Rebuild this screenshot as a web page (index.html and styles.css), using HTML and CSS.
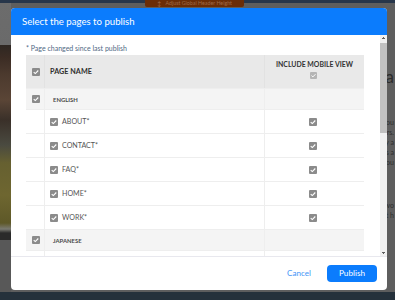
FILE: index.html
```html
<!DOCTYPE html>
<html lang="en">
<head>
<meta charset="utf-8">
<title>Publish pages</title>
<link rel="stylesheet" href="styles.css">
</head>
<body>
<div class="site">
  <div class="topbar">
    <div class="adjust"><span class="adjust-ico">&#x2195;</span>Adjust Global Header Height</div>
  </div>
  <div class="hero">
    <div class="photo-col">
      <div class="photo"></div>
    </div>
    <div class="hero-mid"></div>
    <div class="hero-text">
      <div class="big">Ca</div>
      <p>Will you</p>
      <p>others.</p>
      <p>Many a</p>
      <p>This a</p>
      <p>for you</p>
      <p class="gap">in wo</p>
      <p>that h</p>
    </div>
  </div>
  <div class="bottombar"></div>
</div>

<div class="modal">
  <div class="modal-head">Select the pages to publish</div>
  <div class="modal-body">
    <div class="body-content">
      <p class="note">* Page changed since last publish</p>
      <div class="pages">
        <div class="row head">
          <div class="cell sel"><span class="cb"><svg viewBox="0 0 8 8"><path d="M1.7 4.1 3.3 5.6 6.3 2.5"/></svg></span></div>
          <div class="cell name"><span class="head-label">PAGE NAME</span></div>
          <div class="cell mob mob-head"><span class="mob-label">INCLUDE MOBILE VIEW</span><span class="cb cb-light"><svg viewBox="0 0 8 8"><path d="M1.7 4.1 3.3 5.6 6.3 2.5"/></svg></span></div>
        </div>

        <div class="row lang">
          <div class="cell sel"><span class="cb"><svg viewBox="0 0 8 8"><path d="M1.7 4.1 3.3 5.6 6.3 2.5"/></svg></span></div>
          <div class="cell lang-name">ENGLISH</div>
          <div class="cell mob"></div>
        </div>
        <div class="row page">
          <div class="cell sel"></div>
          <div class="cell name"><span class="cb"><svg viewBox="0 0 8 8"><path d="M1.7 4.1 3.3 5.6 6.3 2.5"/></svg></span>ABOUT*</div>
          <div class="cell mob"><span class="cb"><svg viewBox="0 0 8 8"><path d="M1.7 4.1 3.3 5.6 6.3 2.5"/></svg></span></div>
        </div>
        <div class="row page">
          <div class="cell sel"></div>
          <div class="cell name"><span class="cb"><svg viewBox="0 0 8 8"><path d="M1.7 4.1 3.3 5.6 6.3 2.5"/></svg></span>CONTACT*</div>
          <div class="cell mob"><span class="cb"><svg viewBox="0 0 8 8"><path d="M1.7 4.1 3.3 5.6 6.3 2.5"/></svg></span></div>
        </div>
        <div class="row page">
          <div class="cell sel"></div>
          <div class="cell name"><span class="cb"><svg viewBox="0 0 8 8"><path d="M1.7 4.1 3.3 5.6 6.3 2.5"/></svg></span>FAQ*</div>
          <div class="cell mob"><span class="cb"><svg viewBox="0 0 8 8"><path d="M1.7 4.1 3.3 5.6 6.3 2.5"/></svg></span></div>
        </div>
        <div class="row page">
          <div class="cell sel"></div>
          <div class="cell name"><span class="cb"><svg viewBox="0 0 8 8"><path d="M1.7 4.1 3.3 5.6 6.3 2.5"/></svg></span>HOME*</div>
          <div class="cell mob"><span class="cb"><svg viewBox="0 0 8 8"><path d="M1.7 4.1 3.3 5.6 6.3 2.5"/></svg></span></div>
        </div>
        <div class="row page">
          <div class="cell sel"></div>
          <div class="cell name"><span class="cb"><svg viewBox="0 0 8 8"><path d="M1.7 4.1 3.3 5.6 6.3 2.5"/></svg></span>WORK*</div>
          <div class="cell mob"><span class="cb"><svg viewBox="0 0 8 8"><path d="M1.7 4.1 3.3 5.6 6.3 2.5"/></svg></span></div>
        </div>

        <div class="row lang">
          <div class="cell sel"><span class="cb"><svg viewBox="0 0 8 8"><path d="M1.7 4.1 3.3 5.6 6.3 2.5"/></svg></span></div>
          <div class="cell lang-name">JAPANESE</div>
          <div class="cell mob"></div>
        </div>
        <div class="row page">
          <div class="cell sel"></div>
          <div class="cell name"></div>
          <div class="cell mob"></div>
        </div>
      </div>
    </div>
    <div class="scrollbar" aria-hidden="true">
      <div class="sb-btn sb-up"></div>
      <div class="sb-track"><div class="sb-thumb"></div></div>
      <div class="sb-btn sb-down"></div>
    </div>
  </div>
  <div class="modal-foot">
    <button class="btn-cancel" type="button">Cancel</button>
    <button class="btn-publish" type="button">Publish</button>
  </div>
</div>
</body>
</html>
```
FILE: styles.css
```css
* { box-sizing: border-box; margin: 0; padding: 0; }

html, body {
  width: 395px;
  height: 300px;
  overflow: hidden;
}

body {
  font-family: Lato, "Open Sans", sans-serif;
  background: #5e5e5e;
  position: relative;
}

/* ---------- dimmed page behind the dialog ---------- */
.site {
  height: 300px;
  display: flex;
  flex-direction: column;
}

.topbar {
  height: 3px;
  background: #27364a;
  display: flex;
  align-items: flex-start;
  padding-left: 145px;
}

.adjust {
  width: 99px;
  height: 7px;
  flex: none;
  background: #6b2d07;
  border-radius: 0 0 2px 2px;
  color: #a06b48;
  font-size: 5.3px;
  line-height: 7px;
  display: flex;
  align-items: center;
  justify-content: center;
  gap: 4px;
  position: relative;
  z-index: 1;
}

.adjust-ico { font-size: 6px; }

.hero {
  flex: 1;
  display: grid;
  grid-template-columns: 11px 1fr 8px;
  background: #5e5e5e;
}

.photo-col {
  background: linear-gradient(#6c6c6c 0, #6a6a6a 42px, #585858 42px);
  padding-top: 42px;
}

.photo {
  height: 195px;
  background: linear-gradient(
    #2e2722 0,
    #3b2c24 12px,
    #4c3a2e 30px,
    #5a4536 55px,
    #3a3029 75px,
    #4a4a40 100px,
    #666030 118px,
    #6e6630 150px,
    #5e5828 178px,
    #7a7a72 184px,
    #2a2a2a 188px,
    #2a2a2a 195px
  );
}

/* text of the page behind: lines end at the window edge and run on under the dialog */
.hero-text {
  padding-top: 64px;
  padding-right: 1px;
  color: #2e2e2e;
  font-size: 7px;
  line-height: 10px;
  white-space: nowrap;
}

.hero-text p,
.hero-text .big {
  display: flex;
  justify-content: flex-end;
}

.hero-text .big {
  font-size: 17px;
  line-height: 20px;
  color: #2c2c2c;
  margin-bottom: 30px;
}

.hero-text .gap { margin-top: 33px; }

.bottombar {
  height: 8px;
  background: #25313b;
}

/* ---------- dialog ---------- */
.modal {
  position: absolute;
  left: 11px;
  top: 8px;
  width: 376px;
  height: 282px;
  background: #fff;
  border-radius: 4px;
  overflow: hidden;
  display: flex;
  flex-direction: column;
  z-index: 2;
}

.modal-head {
  height: 27px;
  flex: none;
  background: #0b7cfd;
  color: #fff;
  font-size: 9.6px;
  padding-left: 11px;
  display: flex;
  align-items: center;
}

.modal-body {
  height: 221px;
  flex: none;
  display: flex;
}

.body-content {
  flex: 1;
  min-width: 0;
  overflow: hidden;
  padding: 8px 16px 0 15px;
}

/* scrollbar drawn in flow beside the content */
.scrollbar {
  width: 7px;
  flex: none;
  display: flex;
  flex-direction: column;
  background: #f1f1f1;
}

.sb-btn {
  height: 7px;
  flex: none;
}

.sb-up {
  background:
    linear-gradient(#606060, #606060) 3px 2px / 1px 1px no-repeat,
    linear-gradient(#606060, #606060) 2px 3px / 3px 1px no-repeat;
}

.sb-down {
  background:
    linear-gradient(#606060, #606060) 2px 3px / 3px 1px no-repeat,
    linear-gradient(#606060, #606060) 3px 4px / 1px 1px no-repeat;
}

.sb-track {
  flex: 1;
  padding-top: 1px;
}

.sb-thumb {
  height: 90px;
  background: #c1c1c1;
}

.note {
  font-size: 7px;
  line-height: 10px;
  color: #4f6984;
  margin-bottom: 2px;
}

.pages {
  width: 338px;
}

.row {
  display: grid;
  grid-template-columns: 18px 220px 100px;
  border-bottom: 1px solid #eeeeee;
}

.row.head { height: 34px; background: #e9e9e9; }
.row.lang { height: 21px; background: #f4f4f4; }
.row.page { height: 24px; background: #fff; }

.cell {
  display: flex;
  align-items: center;
  min-width: 0;
}

.cell + .cell { border-left: 1px solid #eeeeee; }
.row.head .cell + .cell { border-left-color: #e2e2e2; }

.cell.sel { justify-content: center; padding-left: 1px; }

.cell.name {
  padding-left: 5px;
  gap: 4px;
  font-size: 7.1px;
  color: #555;
}

.head-label {
  font-weight: 700;
  font-size: 7.2px;
  color: #2e2e2e;
  letter-spacing: 0.05px;
}

.lang-name {
  padding-left: 8px;
  font-size: 5.9px;
  font-weight: 700;
  color: #4a4a4a;
}

.cell.mob { justify-content: center; padding-right: 3px; }

.mob-head {
  flex-direction: column;
  justify-content: center;
  gap: 4px;
  padding-right: 0 !important;
  padding-bottom: 5px;
}

.mob-label {
  font-size: 6.9px;
  font-weight: 700;
  color: #333;
  line-height: 8px;
}

.cb {
  width: 8px;
  height: 8px;
  flex: none;
  background: #8b8b8b;
  border-radius: 1px;
  display: inline-flex;
}

.cb svg {
  width: 8px;
  height: 8px;
  fill: none;
  stroke: #fff;
  stroke-width: 1.1;
}

.cb-light {
  width: 7px;
  height: 7px;
  background: #b5b5b5;
  margin-left: -2px;
}
.cb-light svg { width: 7px; height: 7px; }

.modal-foot {
  flex: 1;
  border-top: 1px solid #e8e8ee;
  display: flex;
  justify-content: flex-end;
  align-items: center;
  gap: 16px;
  padding-right: 10px;
  padding-bottom: 1px;
}

.btn-cancel {
  background: none;
  border: none;
  font-family: inherit;
  font-size: 8.1px;
  color: #3f94f6;
  cursor: pointer;
}

.btn-publish {
  width: 50px;
  height: 17px;
  border: none;
  border-radius: 4px;
  background: #0b7cfd;
  color: #fff;
  font-family: inherit;
  font-size: 8.2px;
  cursor: pointer;
}
```
